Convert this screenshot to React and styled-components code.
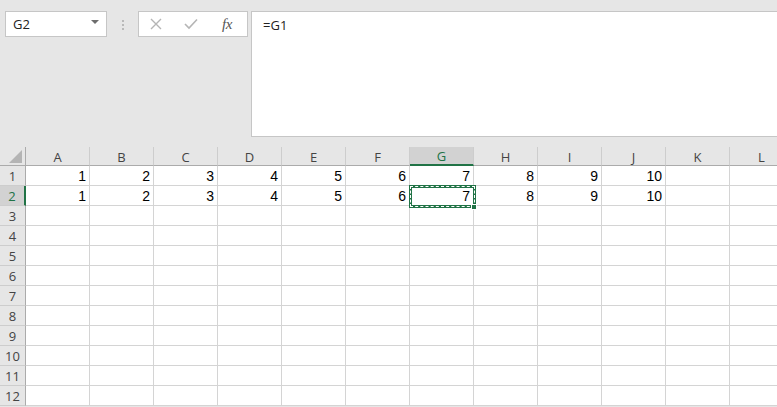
import React from 'react';
import styled, { createGlobalStyle } from 'styled-components';

const GlobalStyle = createGlobalStyle`
  html, body {
    margin: 0;
    padding: 0;
    background: #e6e6e6;
    overflow: hidden;
  }
  * { box-sizing: border-box; }
`;

const COLS = ['A', 'B', 'C', 'D', 'E', 'F', 'G', 'H', 'I', 'J', 'K', 'L'];
const ROWS = Array.from({ length: 12 }, (_, i) => i + 1);
const DATA = {
  1: [1, 2, 3, 4, 5, 6, 7, 8, 9, 10],
  2: [1, 2, 3, 4, 5, 6, 7, 8, 9, 10],
};
const ACTIVE = { col: 'G', row: 2 };
const GREEN = '#217346';

export default function App() {
  return (
    <Page>
      <GlobalStyle />
      <TopArea>
        <NameBox>
          <span>G2</span>
          <Caret />
        </NameBox>
        <Grip>
          <i /><i /><i />
        </Grip>
        <ButtonBox>
          <IconButton>
            <svg width="12" height="12" viewBox="0 0 12 12">
              <path d="M1 1 L11 11 M11 1 L1 11" stroke="#b5b5b5" strokeWidth="1.4" fill="none" />
            </svg>
          </IconButton>
          <IconButton>
            <svg width="14" height="12" viewBox="0 0 14 12">
              <path d="M1 6 L5 10 L13 1.5" stroke="#b5b5b5" strokeWidth="1.6" fill="none" />
            </svg>
          </IconButton>
          <FxLabel>fx</FxLabel>
        </ButtonBox>
        <FormulaInput>=G1</FormulaInput>
      </TopArea>

      <Sheet>
        <Corner>
          <svg width="13" height="13" viewBox="0 0 13 13">
            <polygon points="13,0 13,13 0,13" fill="#b4b4b4" />
          </svg>
        </Corner>
        {COLS.map(c => (
          <ColHeader key={c} $selected={c === ACTIVE.col}>{c}</ColHeader>
        ))}
        {ROWS.map(r => (
          <React.Fragment key={r}>
            <RowHeader $selected={r === ACTIVE.row}>{r}</RowHeader>
            {COLS.map((c, ci) => {
              const v = DATA[r] ? DATA[r][ci] : undefined;
              const active = c === ACTIVE.col && r === ACTIVE.row;
              return (
                <Cell key={c}>
                  {v}
                  {active && (
                    <>
                      <Marquee />
                      <FillHandle />
                    </>
                  )}
                </Cell>
              );
            })}
          </React.Fragment>
        ))}
      </Sheet>
    </Page>
  );
}

// Styled components
const Page = styled.div`
  width: 777px;
  height: 407px;
  overflow: hidden;
  background: #e6e6e6;
  font-family: "Liberation Sans", Arial, sans-serif;
`;

const TopArea = styled.div`
  display: flex;
  align-items: flex-start;
  height: 147px;
  padding: 11px 0 0 5px;
`;

const NameBox = styled.div`
  display: flex;
  align-items: center;
  justify-content: space-between;
  width: 102px;
  height: 26px;
  padding: 0 7px 0 7px;
  background: #fff;
  border: 1px solid #c6c6c6;
  font-family: "Open Sans", "Noto Sans", sans-serif;
  font-size: 13px;
  color: #222;
`;

const Caret = styled.span`
  width: 0;
  height: 0;
  margin-top: -4px;
  border-left: 4px solid transparent;
  border-right: 4px solid transparent;
  border-top: 4px solid #6d6d6d;
`;

const Grip = styled.div`
  display: flex;
  flex-direction: column;
  gap: 2px;
  width: 31px;
  align-items: center;
  padding-top: 9px;
  i {
    display: block;
    width: 2px;
    height: 2px;
    background: #b9b9b9;
  }
`;

const ButtonBox = styled.div`
  display: flex;
  align-items: center;
  width: 110px;
  height: 26px;
  background: #fff;
  border: 1px solid #c6c6c6;
  padding-left: 8px;
  gap: 17px;
`;

const IconButton = styled.span`
  display: flex;
  align-items: center;
  justify-content: center;
  width: 18px;
  height: 18px;
`;

const FxLabel = styled.span`
  font-family: "Liberation Serif", "Times New Roman", serif;
  font-style: italic;
  font-size: 15px;
  color: #555;
  margin-left: 5px;
  letter-spacing: -0.5px;
`;

const FormulaInput = styled.div`
  flex: 1;
  height: 126px;
  margin-left: 3px;
  background: #fff;
  border: 1px solid #c6c6c6;
  border-right: none;
  padding: 4px 0 0 11px;
  font-family: "Open Sans", "Noto Sans", sans-serif;
  font-size: 13px;
  color: #222;
`;

const Sheet = styled.div`
  display: grid;
  grid-template-columns: 26px repeat(12, 64px);
  grid-template-rows: 19px repeat(12, 20px);
  width: max-content;
`;

const HeaderBase = styled.div`
  display: flex;
  align-items: center;
  justify-content: center;
  background: #e6e6e6;
  font-family: "Open Sans", "Noto Sans", sans-serif;
  font-size: 13px;
  color: #444;
  border-right: 1px solid #cdcdcd;
  border-bottom: 1px solid #ababab;
`;

const Corner = styled(HeaderBase)`
  justify-content: flex-end;
  align-items: flex-end;
  padding: 0 3px 2px 0;
  border-right: 1px solid #ababab;
`;

const ColHeader = styled(HeaderBase)`
  padding-top: 1px;
  background: ${p => (p.$selected ? '#d2d2d2' : '#e6e6e6')};
  color: ${p => (p.$selected ? GREEN : '#444')};
  border-bottom: ${p => (p.$selected ? `2px solid ${GREEN}` : '1px solid #ababab')};
`;

const RowHeader = styled(HeaderBase)`
  background: ${p => (p.$selected ? '#d2d2d2' : '#e6e6e6')};
  color: ${p => (p.$selected ? GREEN : '#444')};
  border-bottom: 1px solid #cdcdcd;
  border-right: ${p => (p.$selected ? `2px solid ${GREEN}` : '1px solid #ababab')};
`;

const Cell = styled.div`
  position: relative;
  display: flex;
  align-items: flex-end;
  justify-content: flex-end;
  padding: 0 3px 1px 0;
  background: #fff;
  border-right: 1px solid #d4d4d4;
  border-bottom: 1px solid #d4d4d4;
  font-family: "Liberation Sans", Arial, sans-serif;
  font-size: 14px;
  color: #000;
`;

const Marquee = styled.div`
  position: absolute;
  z-index: 2;
  left: -1px;
  top: -1px;
  width: 67px;
  height: 23px;
  border: 3px solid ${GREEN};
  &::after {
    content: '';
    position: absolute;
    inset: -2px;
    border: 1px dashed #fff;
  }
`;

const FillHandle = styled.div`
  position: absolute;
  z-index: 3;
  right: -4px;
  bottom: -5px;
  width: 6px;
  height: 6px;
  background: ${GREEN};
  border: 1px solid #fff;
`;
